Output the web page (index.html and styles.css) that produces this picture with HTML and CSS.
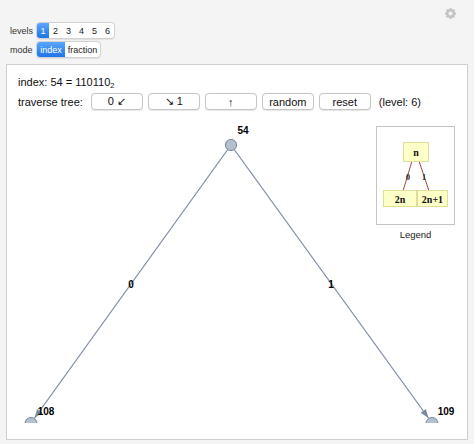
FILE: index.html
```html
<!DOCTYPE html>
<html>
<head>
<meta charset="utf-8">
<link rel="stylesheet" href="styles.css">
</head>
<body>
<div class="top">
  <svg class="gear" width="11" height="11" viewBox="0 0 11 11">
    <circle cx="5.5" cy="5.5" r="4.6" fill="#c4c4c4"/>
    <g stroke="#c4c4c4" stroke-width="2">
      <line x1="5.5" y1="0" x2="5.5" y2="11"/>
      <line x1="0" y1="5.5" x2="11" y2="5.5"/>
      <line x1="1.6" y1="1.6" x2="9.4" y2="9.4"/>
      <line x1="9.4" y1="1.6" x2="1.6" y2="9.4"/>
    </g>
    <circle cx="5.5" cy="5.5" r="2" fill="#f4f4f4"/>
  </svg>
</div>
<div class="controls">
  <div class="row">
    <span class="lbl">levels</span>
    <div class="seg">
      <span class="on w12">1</span><span class="w13">2</span><span class="w13">3</span><span class="w13">4</span><span class="w13">5</span><span class="w13">6</span>
    </div>
  </div>
  <div class="row">
    <span class="lbl">mode</span>
    <div class="seg">
      <span class="on w28">index</span><span class="w35">fraction</span>
    </div>
  </div>
</div>
<div class="panel">
  <div class="info">index: 54 = 110110<sub>2</sub></div>
  <div class="trav">
    <span class="tlabel">traverse tree:</span>
    <button class="btn">0 ↙</button>
    <button class="btn">↘ 1</button>
    <button class="btn">↑</button>
    <button class="btn">random</button>
    <button class="btn">reset</button>
    <span class="lvl">(level: 6)</span>
  </div>
  <div class="tree">
    <svg class="treesvg" width="460" height="308" viewBox="7 116 460 308">
      <defs>
        <marker id="arr" viewBox="0 0 10 10" refX="10" refY="5" markerWidth="9" markerHeight="9" markerUnits="userSpaceOnUse" orient="auto">
          <path d="M0,1.5 L10,5 L0,8.5 z" fill="#7889a3"/>
        </marker>
      </defs>
      <line x1="227.5" y1="150.9" x2="34.5" y2="419.1" class="edge" marker-end="url(#arr)"/>
      <line x1="234.5" y1="150.9" x2="428.5" y2="419.1" class="edge" marker-end="url(#arr)"/>
      <circle cx="231" cy="146" r="5.6" class="node"/>
      <circle cx="31" cy="424.5" r="6" class="node"/>
      <circle cx="432" cy="424.5" r="6" class="node"/>
      <text x="243" y="135" class="nlab">54</text>
      <text x="46" y="416" class="nlab">108</text>
      <text x="446" y="416" class="nlab">109</text>
      <text x="131" y="289" class="elab">0</text>
      <text x="331" y="289" class="elab">1</text>
    </svg>
    <div class="legend">
      <div class="lbox">
        <svg width="77" height="97" viewBox="377 128 77 97">
          <line x1="412" y1="162" x2="403" y2="192" class="lline"/>
          <line x1="419" y1="162" x2="429" y2="192" class="lline"/>
          <rect x="403.5" y="143.5" width="25" height="19" class="lrect"/>
          <rect x="383.5" y="191.5" width="33" height="16" class="lrect"/>
          <rect x="417.5" y="191.5" width="30" height="16" class="lrect"/>
          <text x="416" y="157" class="ltxt">n</text>
          <text x="400" y="203.5" class="ltxt">2n</text>
          <text x="432.5" y="203.5" class="ltxt">2n+1</text>
          <text x="408" y="181" class="lsm">0</text>
          <text x="424" y="181" class="lsm">1</text>
        </svg>
      </div>
      <div class="lcap">Legend</div>
    </div>
  </div>
</div>
</body>
</html>
```
FILE: styles.css
```css
html, body {
  margin: 0;
  padding: 0;
}
body {
  background: #f4f4f4;
  font-family: "Liberation Sans", Arial, sans-serif;
  width: 474px;
  height: 444px;
  overflow: hidden;
}
.top {
  height: 22px;
  display: flex;
  justify-content: flex-end;
  align-items: flex-start;
}
.gear {
  margin-top: 8px;
  margin-right: 18px;
}
.controls {
  padding-left: 10px;
  display: flex;
  flex-direction: column;
  gap: 2px;
}
.row {
  display: flex;
  align-items: center;
  height: 17px;
}
.lbl {
  width: 26px;
  font-size: 9px;
  color: #333;
}
.seg {
  display: flex;
  height: 17px;
  border: 1px solid #d2d2d2;
  border-radius: 4px;
  background: #fff;
  box-sizing: border-box;
  overflow: hidden;
  box-shadow: 0 0.5px 1px rgba(0,0,0,0.08);
}
.seg span {
  display: flex;
  align-items: center;
  justify-content: center;
  font-size: 9px;
  color: #222;
}
.seg span.on {
  background: linear-gradient(#5aa6fb, #1f74e8);
  color: #fff;
}
.w12 { width: 12px; }
.w13 { width: 13px; }
.w28 { width: 28px; }
.w35 { width: 35px; }
.panel {
  margin: 6px 6px 0 6px;
  height: 376px;
  box-sizing: border-box;
  border: 1px solid #cfcfcf;
  background: #fff;
  display: flex;
  flex-direction: column;
}
.info {
  padding: 10px 0 0 11px;
  font-size: 11px;
  line-height: 15px;
  height: 15px;
  color: #111;
}
.info sub {
  font-size: 7.5px;
  line-height: 0;
  vertical-align: -2px;
}
.trav {
  margin-top: 3px;
  padding-left: 11px;
  display: flex;
  align-items: center;
  height: 17px;
  font-size: 11px;
  color: #111;
}
.tlabel {
  margin-right: 8px;
}
.btn {
  width: 52px;
  height: 17px;
  margin: 0 5px 0 0;
  padding: 0;
  border: 1px solid #c6c6c6;
  border-radius: 4px;
  background: #fff;
  font-family: "Liberation Sans", Arial, sans-serif;
  font-size: 11px;
  color: #111;
  box-shadow: 0 0.5px 1px rgba(0,0,0,0.1);
}
.lvl {
  margin-left: 3px;
}
.tree {
  position: relative;
  margin-top: 5px;
  height: 308px;
  overflow: hidden;
}
.treesvg {
  display: block;
}
.edge {
  stroke: #8190a8;
  stroke-width: 1.1;
}
.node {
  fill: #b3c0d0;
  stroke: #5f6e82;
  stroke-width: 0.8;
}
.nlab {
  font-family: "Liberation Sans", Arial, sans-serif;
  font-weight: bold;
  font-size: 10px;
  fill: #000;
  text-anchor: middle;
}
.elab {
  font-family: "Liberation Sans", Arial, sans-serif;
  font-weight: bold;
  font-size: 10px;
  fill: #000;
  text-anchor: middle;
}
.legend {
  position: absolute;
  left: 369px;
  top: 11px;
  width: 79px;
  display: flex;
  flex-direction: column;
  align-items: center;
}
.lbox {
  width: 79px;
  height: 99px;
  box-sizing: border-box;
  border: 1px solid #c4c4c4;
  background: #fff;
}
.lbox svg {
  display: block;
}
.lline {
  stroke: #a04848;
  stroke-width: 1;
}
.lrect {
  fill: #ffffc8;
  stroke: #dede9a;
  stroke-width: 1;
}
.ltxt {
  font-family: "Liberation Serif", "Times New Roman", serif;
  font-weight: bold;
  font-size: 10px;
  fill: #111;
  text-anchor: middle;
}
.lsm {
  font-family: "Liberation Serif", "Times New Roman", serif;
  font-weight: bold;
  font-size: 8px;
  fill: #222;
  text-anchor: middle;
}
.lcap {
  margin-top: 4px;
  font-size: 9.5px;
  color: #222;
}
```
